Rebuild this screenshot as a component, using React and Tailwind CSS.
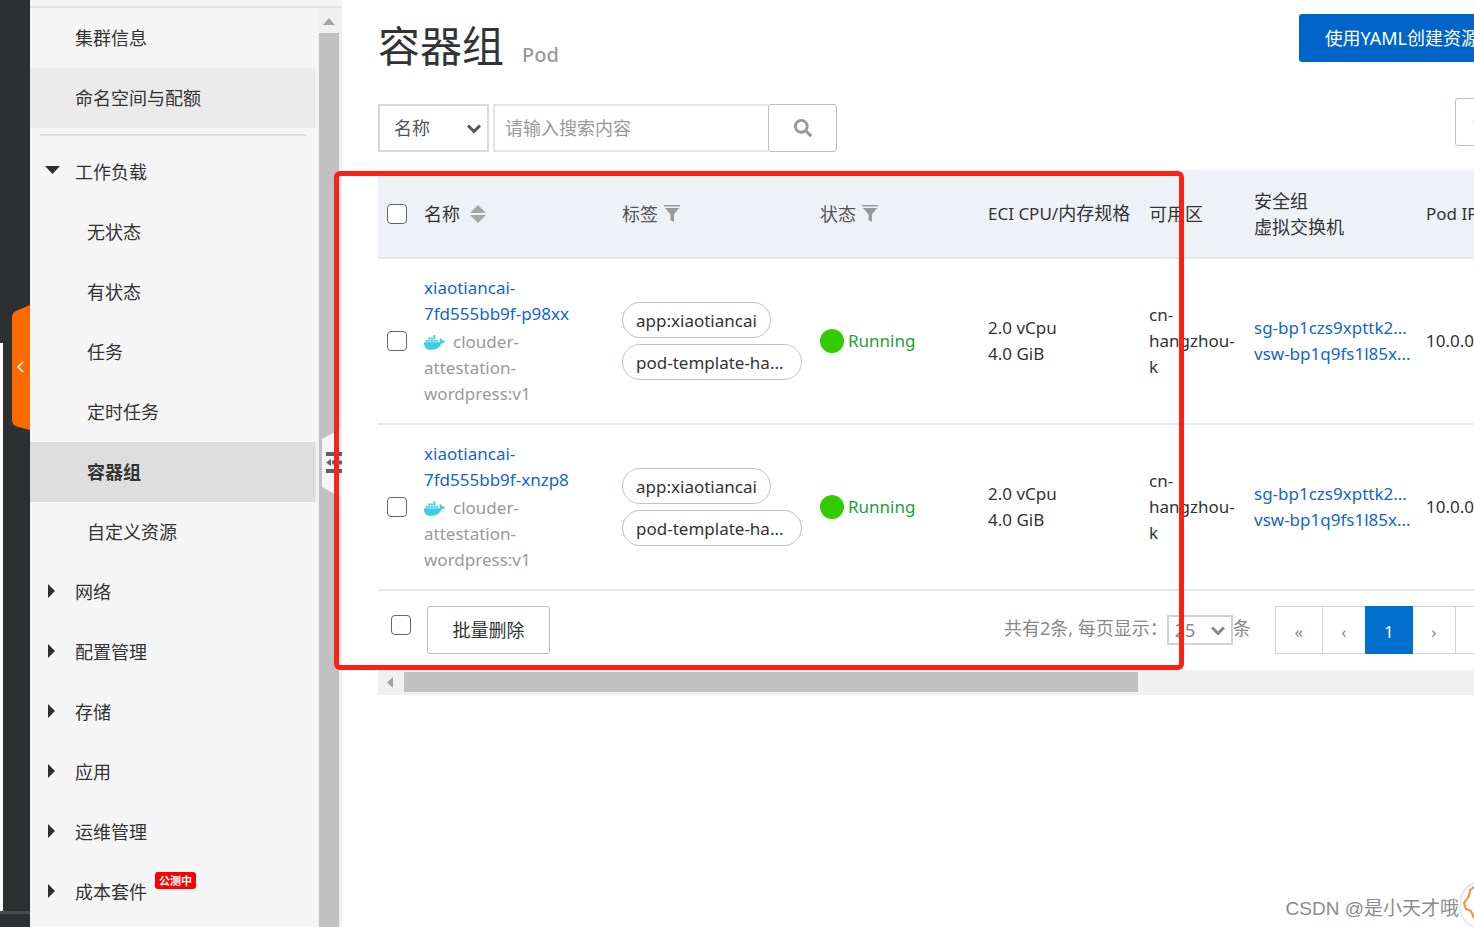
import React from "react";
import { FaDocker, FaSearch } from "react-icons/fa";

const BOX =
  "block size-5 shrink-0 appearance-none rounded border border-[#666] bg-white checked:bg-[#0070cc]";

const children = ["无状态", "有状态", "任务", "定时任务", "容器组", "自定义资源"];
const groups = ["网络", "配置管理", "存储", "应用", "运维管理", "成本套件"];

const pods = [
  { id: "p98xx", name: ["xiaotiancai-", "7fd555bb9f-p98xx"] },
  { id: "xnzp8", name: ["xiaotiancai-", "7fd555bb9f-xnzp8"] },
];

function Triangle({ open }) {
  return (
    <svg viewBox="0 0 16 16" className="mr-[14px] size-4 shrink-0" fill="#2b2f33" aria-hidden="true">
      <path d={open ? "M0 2h15L7.500 10z" : "M3 0v14l7-7z"} />
    </svg>
  );
}

function Filter() {
  return (
    <svg viewBox="0 0 16 18" className="ml-1.5 h-[18px] w-4" fill="#9a9a9a" aria-hidden="true">
      <path d="M0 0h16v1.500H0zM1 3h14L10 9.500V17L6.500 15V9.500z" />
    </svg>
  );
}

function Rail() {
  return (
    <div className="relative w-[30px] shrink-0 bg-[#2e2f31]">
      <div className="absolute top-[343px] bottom-4 left-0 w-[3px] bg-white" />
      <div className="absolute bottom-[13px] left-0 h-[3px] w-full bg-[#4a4b4d]" />
      <button aria-label="收起" className="absolute top-[305px] right-0 h-[125px] w-[18px]">
        <svg viewBox="0 0 18 125" className="h-[125px] w-[18px]" aria-hidden="true">
          <path d="M18 0L4 6Q0 8 0 12V115Q0 120 5 121.500L18 125z" fill="#ff6a00" />
          <path d="M11 57L6 62L11 67" fill="none" stroke="#fff" strokeWidth="1.500" />
        </svg>
      </button>
    </div>
  );
}

function Sidebar() {
  return (
    <aside className="relative flex w-[312px] shrink-0 flex-col bg-[#f5f5f5] text-[18px] text-[#333]">
      <div className="h-2 shrink-0 border-b-2 border-[#e2e2e2]" />
      <div className="flex flex-1">
        <nav className="w-[286px]">
          <a href="#cluster" className="flex h-[60px] items-center pl-[45px]">集群信息</a>
          <a href="#ns" className="flex h-[60px] items-center bg-[#ebebeb] pl-[45px]">命名空间与配额</a>
          <div className="mx-[10px] mt-1.5 mb-1.5 h-0.5 bg-[#dfdfdf]" />
          <a href="#workload" className="flex h-[60px] items-center pl-[15px]">
            <Triangle open />
            工作负载
          </a>
          {children.map((c) => (
            <a
              key={c}
              href="#item"
              className={
                c === "容器组"
                  ? "flex h-[60px] items-center bg-[#dedede] pl-[57px] font-bold"
                  : "flex h-[60px] items-center pl-[57px]"
              }
            >
              {c}
            </a>
          ))}
          {groups.map((g) => (
            <a key={g} href="#group" className="flex h-[60px] items-center pl-[15px]">
              <Triangle />
              {g}
              {g === "成本套件" && (
                <span className="mb-6 ml-2 rounded-[3px] bg-[#f00] px-1 text-[11px] leading-[17px] font-bold text-white">
                  公测中
                </span>
              )}
            </a>
          ))}
        </nav>
        <div className="ml-0.5 flex w-6 flex-col items-start bg-[#f0f0f0] pl-px">
          <svg viewBox="0 0 12 7" className="mt-[10px] mb-2 ml-1 h-[7px] w-3" fill="#a3a3a3" aria-hidden="true">
            <path d="M6 0l6 7H0z" />
          </svg>
          <div className="w-5 flex-1 bg-[#c1c1c1]" />
        </div>
      </div>
      <button aria-label="折叠菜单" className="absolute top-[428px] right-0 h-[70px] w-5">
        <svg viewBox="0 0 20 70" className="h-[70px] w-5" aria-hidden="true">
          <path d="M20 0L0 11V59L20 70z" fill="#f7f7f7" />
          <path
            d="M4 24h16v4H4zM10 32.500h10v4H10zM4 41h16v4H4zM9 31v7l-5-3.500z"
            fill="#546478"
          />
        </svg>
      </button>
    </aside>
  );
}

function PodRow({ pod }) {
  return (
    <tr className="h-[166px] border-b-2 border-[#e6eaef] text-[17px] leading-[26px]">
      <td className="pl-[9px]">
        <input type="checkbox" aria-label={pod.name[1]} className={BOX} />
      </td>
      <td>
        <a href="#pod" className="block text-[#1366c9]">
          {pod.name[0]}
          <br />
          {pod.name[1]}
        </a>
        <div className="pt-0.5 text-[#999]">
          <div className="flex items-center">
            <FaDocker className="mr-2 size-[21px] text-[#3dcbe6]" />
            clouder-
          </div>
          attestation-
          <br />
          wordpress:v1
        </div>
      </td>
      <td>
        <div className="flex flex-col items-start gap-1.5">
          <span className="h-9 rounded-full border border-[#bcc3cb] px-[13px] leading-9">app:xiaotiancai</span>
          <span className="h-9 w-[180px] rounded-full border border-[#bcc3cb] px-[13px] leading-9">
            pod-template-ha...
          </span>
        </div>
      </td>
      <td>
        <div className="flex items-center gap-1 text-[#22a03a]">
          <span className="size-6 rounded-full bg-[#33cc00]" />
          Running
        </div>
      </td>
      <td>
        2.0 vCpu
        <br />
        4.0 GiB
      </td>
      <td>
        cn-
        <br />
        hangzhou-
        <br />k
      </td>
      <td>
        <a href="#sg" className="block text-[#1366c9]">sg-bp1czs9xpttk2...</a>
        <a href="#vsw" className="block text-[#1366c9]">vsw-bp1q9fs1l85x...</a>
      </td>
      <td>10.0.0.</td>
    </tr>
  );
}

function PodTable() {
  return (
    <table className="w-[1248px] table-fixed border-collapse text-left text-[#333]">
      <colgroup>
        <col className="w-[46px]" />
        <col className="w-[198px]" />
        <col className="w-[198px]" />
        <col className="w-[168px]" />
        <col className="w-[161px]" />
        <col className="w-[105px]" />
        <col className="w-[172px]" />
        <col className="w-[200px]" />
      </colgroup>
      <thead>
        <tr className="h-[88px] border-b-2 border-[#e1e6eb] bg-[#eef1f6] text-[18px] leading-[26px] [&>th]:font-normal">
          <th className="pl-[9px]">
            <input type="checkbox" aria-label="全选" className={BOX} />
          </th>
          <th>
            <div className="flex items-center">
              名称
              <svg viewBox="0 0 16 18" className="ml-2.5 h-[18px] w-4" fill="#a6a6a6" aria-hidden="true">
                <path d="M8 0l8 8H0zM0 10h16l-8 8z" />
              </svg>
            </div>
          </th>
          <th>
            <div className="flex items-center text-[#555]">标签<Filter /></div>
          </th>
          <th>
            <div className="flex items-center text-[#555]">状态<Filter /></div>
          </th>
          <th className="whitespace-nowrap">
            <span className="text-[17px]">ECI CPU/</span>内存规格
          </th>
          <th>可用区</th>
          <th>
            安全组
            <br />
            虚拟交换机
          </th>
          <th className="text-[17px]">Pod IP</th>
        </tr>
      </thead>
      <tbody>
        {pods.map((p) => (
          <PodRow key={p.id} pod={p} />
        ))}
      </tbody>
    </table>
  );
}

function Chevron({ className }) {
  return (
    <svg viewBox="0 0 14 10" className={className} fill="none" stroke="currentColor" strokeWidth="3" aria-hidden="true">
      <path d="M1 1.500l6 6 6-6" />
    </svg>
  );
}

function Footer() {
  return (
    <div className="flex h-[79px] w-[1248px] items-start pt-[15px] text-[18px] text-[#888]">
      <input type="checkbox" aria-label="选择全部" className={`${BOX} mt-[9px] ml-[13px]`} />
      <button className="ml-4 h-12 w-[123px] rounded-[3px] border border-[#b8bec5] text-[#333]">批量删除</button>
      <label htmlFor="size" className="ml-[454px] leading-[44px] whitespace-nowrap">共有2条, 每页显示：</label>
      <div className="relative mt-[9px] -ml-px shrink-0">
        <select
          id="size"
          className="block h-[30px] w-[66px] appearance-none border-2 border-[#d2d2d2] bg-white pl-1.5 text-[18px] leading-[26px]"
        >
          <option>25</option>
        </select>
        <Chevron className="pointer-events-none absolute top-[11px] right-2 h-2.5 w-3.5" />
      </div>
      <span className="leading-[44px]">条</span>
      <div className="ml-6 flex h-12 shrink-0 border border-[#d4d4d4] text-[17px]">
        <button className="w-[47px] border-r border-[#d4d4d4] pt-1">«</button>
        <button className="w-[42px] pt-1">‹</button>
        <button className="-my-px w-12 bg-[#0070cc] pt-1 text-white">1</button>
        <button className="w-[43px] border-r border-[#d4d4d4] pt-1">›</button>
        <button className="w-11 pt-1">»</button>
      </div>
    </div>
  );
}

function Main() {
  return (
    <main className="min-w-0 flex-1 overflow-hidden pl-9 text-[#333]">
      <header className="flex h-[98px] items-start justify-between">
        <h1 className="flex items-baseline pt-4 text-[42px] leading-[60px]">
          容器组
          <small className="ml-[18px] text-[20px] font-medium text-[#999]">Pod</small>
        </h1>
        <button className="-mr-[31px] mt-3.5 h-12 rounded-[3px] bg-[#0064c8] px-[26px] text-[18px] whitespace-nowrap text-white">
          使用YAML创建资源
        </button>
      </header>
      <div className="flex h-[72px] items-start text-[18px]">
        <div className="relative mt-1.5">
          <select
            aria-label="搜索字段"
            className="block h-12 w-[111px] appearance-none border-2 border-[#d8dadc] bg-white pl-3.5 text-[#555]"
          >
            <option>名称</option>
          </select>
          <Chevron className="pointer-events-none absolute top-5 right-2 h-2.5 w-3.5 text-[#555]" />
        </div>
        <input
          type="text"
          aria-label="搜索"
          placeholder="请输入搜索内容"
          className="mt-1.5 ml-1 h-12 w-[275px] border-2 border-r-0 border-[#e4e4e4] pl-2.5 placeholder:text-[#999]"
        />
        <button
          aria-label="查询"
          className="mt-1.5 flex h-12 w-[69px] items-center justify-center rounded-[3px] border border-[#b8bec5] text-[#999]"
        >
          <FaSearch className="size-[18px]" />
        </button>
        <button aria-label="刷新" className="-mr-8 ml-auto h-12 w-[51px] rounded-[3px] border border-[#b8bec5] pl-4">
          <svg viewBox="0 0 20 20" className="size-5" fill="none" stroke="#666" strokeWidth="2.500" aria-hidden="true">
            <path d="M16 7A7 7 0 1 0 17 11M17 3v5h-5" />
          </svg>
        </button>
      </div>
      <div className="overflow-hidden">
        <PodTable />
        <Footer />
      </div>
      <div className="flex h-[25px] items-start bg-[#f0f0f0] pt-0.5">
        <svg viewBox="0 0 6 11" className="mt-[5px] mr-[11px] ml-[9px] h-[11px] w-1.5" fill="#a3a3a3" aria-hidden="true">
          <path d="M6 0v11L0 5.500z" />
        </svg>
        <div className="h-5 w-[67%] bg-[#c1c1c1]" />
      </div>
    </main>
  );
}

export default function App() {
  return (
    <div className="relative flex min-h-screen overflow-hidden bg-white font-['Noto_Sans','Noto_Sans_CJK_SC',sans-serif]">
      <Rail />
      <Sidebar />
      <Main />
      <div className="pointer-events-none absolute top-[171px] left-[334px] h-[499px] w-[850px] rounded-md border-5 border-[#ff2015]" />
      <div className="absolute right-[15px] bottom-1 font-['Liberation_Sans','Noto_Sans_CJK_SC',sans-serif] text-[19px] text-[#8c8c8c]">
        CSDN @是小天才哦
      </div>
      <svg viewBox="0 0 14 50" className="absolute right-0 bottom-0 h-[50px] w-3.5" fill="none" aria-hidden="true">
        <path d="M14 6Q0 12 0 28T14 50" stroke="#e5e5e5" strokeWidth="2" />
        <path d="M14 10l-4 3-1 6-5 7 2 6 5 2 3 7" stroke="#ff8a3d" strokeWidth="2" />
      </svg>
    </div>
  );
}
